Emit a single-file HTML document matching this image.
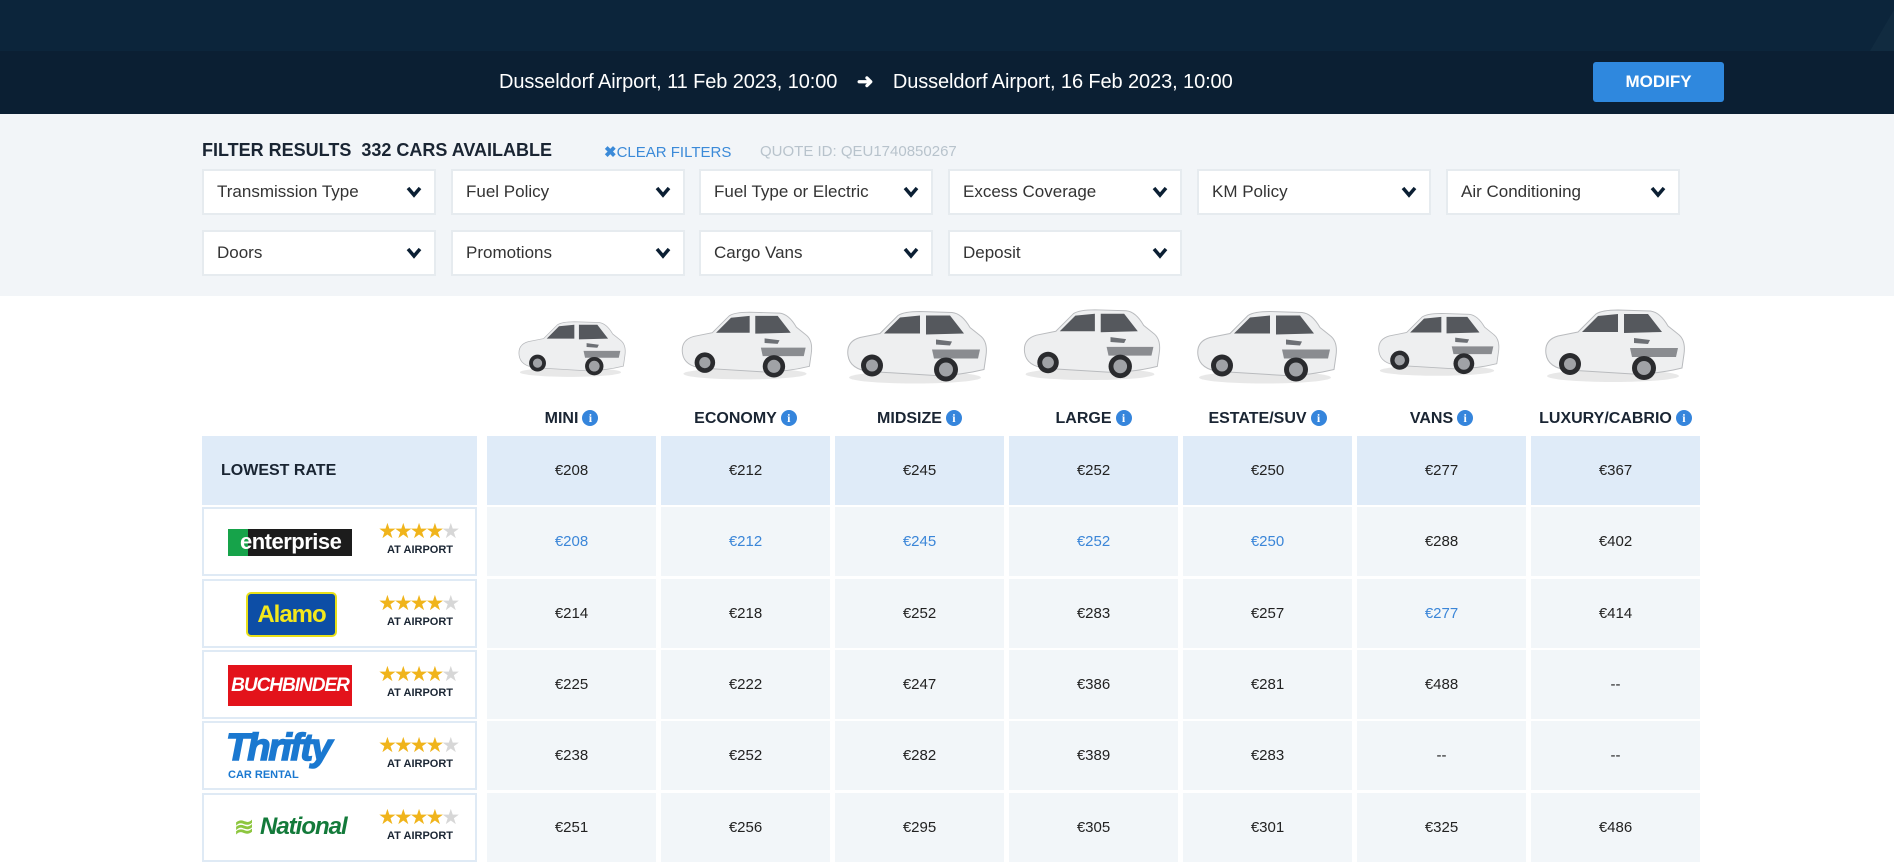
<!DOCTYPE html>
<html><head><meta charset="utf-8"><style>
*{margin:0;padding:0;box-sizing:border-box}
body{width:1894px;height:862px;overflow:hidden;background:#fff;font-family:"Liberation Sans",Arial,sans-serif;position:relative}
.hdr{position:absolute;left:0;top:0;width:1894px;height:114px;background:#0b1f33}
.band{position:absolute;left:0;top:0;width:1894px;height:51px;background:#0c253b}
.route{position:absolute;top:69px;left:499px;color:#fff;font-size:20px;white-space:nowrap;letter-spacing:-0.1px}
.mod{position:absolute;left:1593px;top:62px;width:131px;height:40px;background:#2f88de;border-radius:3px;color:#fff;font-weight:bold;font-size:17px;text-align:center;line-height:40px}
.filt{position:absolute;left:0;top:114px;width:1894px;height:182px;background:#f2f5f8}
.ft{position:absolute;top:140px;left:202px;font-weight:bold;font-size:18px;color:#1a2533;white-space:nowrap}
.clr{position:absolute;top:143px;left:604px;font-size:15px;color:#3b8ad8}
.qid{position:absolute;top:143px;left:760px;font-size:15px;color:#b8c3cc}
.dd{position:absolute;width:234px;height:46px;background:#fff;border:2px solid #e6ebef;font-size:17px;color:#333;padding-left:13px;line-height:42px}
.dd svg{position:absolute;right:12px;top:15px}
.car{position:absolute;top:302px}
.ch{position:absolute;top:410px;width:169px;text-align:center;font-weight:bold;font-size:16px;color:#1a2533;line-height:17px}
.ii{display:inline-block;width:16px;height:16px;border-radius:50%;background:#3585dc;color:#fff;font-size:12px;line-height:16px;text-align:center;vertical-align:top;margin-left:4px;font-family:"Liberation Serif",serif;font-weight:bold}
.cell{position:absolute;width:169px;background:#f2f6f9;text-align:center;font-size:15px;color:#222}
.lab{position:absolute;left:202px;width:275px;background:#fff;border:2px solid #dfeaf5}
.stars{position:absolute;left:174px;top:12px;font-size:21px;letter-spacing:-3px;color:#f0b41b;line-height:21px}
.stars span{color:#d7d7d7}
.ap{position:absolute;left:183px;top:35px;font-size:11px;font-weight:bold;color:#1a2533}
</style></head><body>
<div class="hdr"></div><div class="band"></div>
<svg style="position:absolute;left:1840px;top:0" width="54" height="51"><path d="M30 51 L54 10 L54 51 Z" fill="#112b40"/></svg>
<div class="route">Dusseldorf Airport, 11 Feb 2023, 10:00 <span style="font-weight:bold;margin:0 14px">&#10140;</span> Dusseldorf Airport, 16 Feb 2023, 10:00</div>
<div class="mod">MODIFY</div>
<div class="filt"></div>
<div class="ft">FILTER RESULTS &nbsp;332 CARS AVAILABLE</div>
<div class="clr"><b>✖</b>CLEAR FILTERS</div>
<div class="qid">QUOTE ID: QEU1740850267</div>

<div class="dd" style="left:202px;top:169px">Transmission Type<svg width="16" height="12"><path d="M2 2 L8 9 L14 2" stroke="#0b1f33" stroke-width="3.5" fill="none"/></svg></div>
<div class="dd" style="left:451px;top:169px">Fuel Policy<svg width="16" height="12"><path d="M2 2 L8 9 L14 2" stroke="#0b1f33" stroke-width="3.5" fill="none"/></svg></div>
<div class="dd" style="left:699px;top:169px">Fuel Type or Electric<svg width="16" height="12"><path d="M2 2 L8 9 L14 2" stroke="#0b1f33" stroke-width="3.5" fill="none"/></svg></div>
<div class="dd" style="left:948px;top:169px">Excess Coverage<svg width="16" height="12"><path d="M2 2 L8 9 L14 2" stroke="#0b1f33" stroke-width="3.5" fill="none"/></svg></div>
<div class="dd" style="left:1197px;top:169px">KM Policy<svg width="16" height="12"><path d="M2 2 L8 9 L14 2" stroke="#0b1f33" stroke-width="3.5" fill="none"/></svg></div>
<div class="dd" style="left:1446px;top:169px">Air Conditioning<svg width="16" height="12"><path d="M2 2 L8 9 L14 2" stroke="#0b1f33" stroke-width="3.5" fill="none"/></svg></div>
<div class="dd" style="left:202px;top:230px">Doors<svg width="16" height="12"><path d="M2 2 L8 9 L14 2" stroke="#0b1f33" stroke-width="3.5" fill="none"/></svg></div>
<div class="dd" style="left:451px;top:230px">Promotions<svg width="16" height="12"><path d="M2 2 L8 9 L14 2" stroke="#0b1f33" stroke-width="3.5" fill="none"/></svg></div>
<div class="dd" style="left:699px;top:230px">Cargo Vans<svg width="16" height="12"><path d="M2 2 L8 9 L14 2" stroke="#0b1f33" stroke-width="3.5" fill="none"/></svg></div>
<div class="dd" style="left:948px;top:230px">Deposit<svg width="16" height="12"><path d="M2 2 L8 9 L14 2" stroke="#0b1f33" stroke-width="3.5" fill="none"/></svg></div>

<svg width="0" height="0" style="position:absolute"><defs><g id="car">
<ellipse cx="75" cy="74" rx="66" ry="6" fill="#e8e8e8"/>
<path d="M8 52 Q6 38 20 34 L40 30 L58 12 Q64 8 80 8 L112 9 Q122 10 130 24 L140 32 Q148 38 146 52 L144 66 Q120 72 95 72 L30 68 Q10 66 8 52 Z" fill="#eeeff0" stroke="#b9bbbe"/>
<path d="M44 30 L60 14 L80 12 L80 30 Z M86 12 L110 12 L124 30 L86 31 Z" fill="#55585d"/>
<path d="M92 46 L140 46 L138 55 L94 55 Z" fill="#8a8c90"/>
<path d="M96 36 L112 38 L110 42 L96 41Z" fill="#6d7075"/>
<circle cx="32" cy="62" r="11" fill="#2a2b2e"/><circle cx="32" cy="62" r="6" fill="#a0a2a6"/>
<circle cx="106" cy="66" r="12" fill="#2a2b2e"/><circle cx="106" cy="66" r="7" fill="#a0a2a6"/>
</g></defs></svg>
<svg class="car" style="left:513px;top:312px" width="115" height="70" viewBox="0 0 150 82"><use href="#car"/></svg>
<svg class="car" style="left:675px" width="140" height="82" viewBox="0 0 150 82"><use href="#car"/></svg>
<svg class="car" style="left:840px" width="150" height="85" viewBox="0 0 150 82"><use href="#car"/></svg>
<svg class="car" style="left:1015px" width="150" height="80" viewBox="0 0 150 82"><use href="#car"/></svg>
<svg class="car" style="left:1190px" width="150" height="85" viewBox="0 0 150 82"><use href="#car"/></svg>
<svg class="car" style="left:1372px" width="130" height="80" viewBox="0 0 150 82"><use href="#car"/></svg>
<svg class="car" style="left:1538px" width="150" height="82" viewBox="0 0 150 82"><use href="#car"/></svg>

<div class="ch" style="left:487px">MINI<span class="ii">i</span></div>
<div class="ch" style="left:661px">ECONOMY<span class="ii">i</span></div>
<div class="ch" style="left:835px">MIDSIZE<span class="ii">i</span></div>
<div class="ch" style="left:1009px">LARGE<span class="ii">i</span></div>
<div class="ch" style="left:1183px">ESTATE/SUV<span class="ii">i</span></div>
<div class="ch" style="left:1357px">VANS<span class="ii">i</span></div>
<div class="ch" style="left:1531px">LUXURY/CABRIO<span class="ii">i</span></div>

<div style="position:absolute;left:202px;top:436px;width:275px;height:69px;background:#dfebf8;font-weight:bold;font-size:16px;color:#1a2533;padding-left:19px;line-height:69px">LOWEST RATE</div>
<div class="cell" style="left:487px;top:436px;height:69px;line-height:69px;background:#dfebf8">€208</div>
<div class="cell" style="left:661px;top:436px;height:69px;line-height:69px;background:#dfebf8">€212</div>
<div class="cell" style="left:835px;top:436px;height:69px;line-height:69px;background:#dfebf8">€245</div>
<div class="cell" style="left:1009px;top:436px;height:69px;line-height:69px;background:#dfebf8">€252</div>
<div class="cell" style="left:1183px;top:436px;height:69px;line-height:69px;background:#dfebf8">€250</div>
<div class="cell" style="left:1357px;top:436px;height:69px;line-height:69px;background:#dfebf8">€277</div>
<div class="cell" style="left:1531px;top:436px;height:69px;line-height:69px;background:#dfebf8">€367</div>

<div class="lab" style="top:507px;height:69px">
 <div style="position:absolute;left:24px;top:20px;width:124px;height:27px;background:#1c1c1c;color:#fff;font-weight:bold;font-size:22px;line-height:26px;overflow:hidden;white-space:nowrap;letter-spacing:-0.5px"><span style="display:inline-block;background:#16a34a;width:20px;height:27px;vertical-align:top"></span><span style="margin-left:-8px">enterprise</span></div>
 <div class="stars">★★★★<span>★</span></div><div class="ap">AT AIRPORT</div>
</div>
<div class="cell" style="left:487px;top:507px;height:69px;line-height:69px;color:#3b86d8">€208</div>
<div class="cell" style="left:661px;top:507px;height:69px;line-height:69px;color:#3b86d8">€212</div>
<div class="cell" style="left:835px;top:507px;height:69px;line-height:69px;color:#3b86d8">€245</div>
<div class="cell" style="left:1009px;top:507px;height:69px;line-height:69px;color:#3b86d8">€252</div>
<div class="cell" style="left:1183px;top:507px;height:69px;line-height:69px;color:#3b86d8">€250</div>
<div class="cell" style="left:1357px;top:507px;height:69px;line-height:69px">€288</div>
<div class="cell" style="left:1531px;top:507px;height:69px;line-height:69px">€402</div>

<div class="lab" style="top:579px;height:69px">
 <div style="position:absolute;left:42px;top:11px;width:91px;height:45px;background:#0d4ea6;border:2px solid #e8e01a;border-radius:5px;color:#f4e81c;font-weight:bold;font-size:24px;line-height:41px;text-align:center;letter-spacing:-1px">Alamo</div>
 <div class="stars">★★★★<span>★</span></div><div class="ap">AT AIRPORT</div>
</div>
<div class="cell" style="left:487px;top:579px;height:69px;line-height:69px">€214</div>
<div class="cell" style="left:661px;top:579px;height:69px;line-height:69px">€218</div>
<div class="cell" style="left:835px;top:579px;height:69px;line-height:69px">€252</div>
<div class="cell" style="left:1009px;top:579px;height:69px;line-height:69px">€283</div>
<div class="cell" style="left:1183px;top:579px;height:69px;line-height:69px">€257</div>
<div class="cell" style="left:1357px;top:579px;height:69px;line-height:69px;color:#3b86d8">€277</div>
<div class="cell" style="left:1531px;top:579px;height:69px;line-height:69px">€414</div>

<div class="lab" style="top:650px;height:69px">
 <div style="position:absolute;left:24px;top:13px;width:124px;height:41px;background:#e3131b;color:#fff;font-weight:bold;font-style:italic;font-size:19px;line-height:41px;text-align:center;letter-spacing:-1px">BUCHBINDER</div>
 <div class="stars">★★★★<span>★</span></div><div class="ap">AT AIRPORT</div>
</div>
<div class="cell" style="left:487px;top:650px;height:69px;line-height:69px">€225</div>
<div class="cell" style="left:661px;top:650px;height:69px;line-height:69px">€222</div>
<div class="cell" style="left:835px;top:650px;height:69px;line-height:69px">€247</div>
<div class="cell" style="left:1009px;top:650px;height:69px;line-height:69px">€386</div>
<div class="cell" style="left:1183px;top:650px;height:69px;line-height:69px">€281</div>
<div class="cell" style="left:1357px;top:650px;height:69px;line-height:69px">€488</div>
<div class="cell" style="left:1531px;top:650px;height:69px;line-height:69px">--</div>

<div class="lab" style="top:721px;height:69px">
 <div style="position:absolute;left:22px;top:6px;width:130px;color:#1a78d0;font-weight:900;font-style:italic;font-size:38px;line-height:38px;letter-spacing:-2px;-webkit-text-stroke:1.5px #1a78d0">Thrifty</div>
 <div style="position:absolute;left:24px;top:46px;color:#1a78d0;font-weight:bold;font-size:11px">CAR RENTAL</div>
 <div class="stars">★★★★<span>★</span></div><div class="ap">AT AIRPORT</div>
</div>
<div class="cell" style="left:487px;top:721px;height:69px;line-height:69px">€238</div>
<div class="cell" style="left:661px;top:721px;height:69px;line-height:69px">€252</div>
<div class="cell" style="left:835px;top:721px;height:69px;line-height:69px">€282</div>
<div class="cell" style="left:1009px;top:721px;height:69px;line-height:69px">€389</div>
<div class="cell" style="left:1183px;top:721px;height:69px;line-height:69px">€283</div>
<div class="cell" style="left:1357px;top:721px;height:69px;line-height:69px">--</div>
<div class="cell" style="left:1531px;top:721px;height:69px;line-height:69px">--</div>

<div class="lab" style="top:793px;height:69px">
 <div style="position:absolute;left:30px;top:18px;color:#8dc63f;font-size:24px;font-weight:bold">≋</div>
 <div style="position:absolute;left:56px;top:18px;color:#137a3a;font-weight:bold;font-style:italic;font-size:24px;letter-spacing:-1px">National</div>
 <div class="stars">★★★★<span>★</span></div><div class="ap">AT AIRPORT</div>
</div>
<div class="cell" style="left:487px;top:793px;height:69px;line-height:69px">€251</div>
<div class="cell" style="left:661px;top:793px;height:69px;line-height:69px">€256</div>
<div class="cell" style="left:835px;top:793px;height:69px;line-height:69px">€295</div>
<div class="cell" style="left:1009px;top:793px;height:69px;line-height:69px">€305</div>
<div class="cell" style="left:1183px;top:793px;height:69px;line-height:69px">€301</div>
<div class="cell" style="left:1357px;top:793px;height:69px;line-height:69px">€325</div>
<div class="cell" style="left:1531px;top:793px;height:69px;line-height:69px">€486</div>
</body></html>
